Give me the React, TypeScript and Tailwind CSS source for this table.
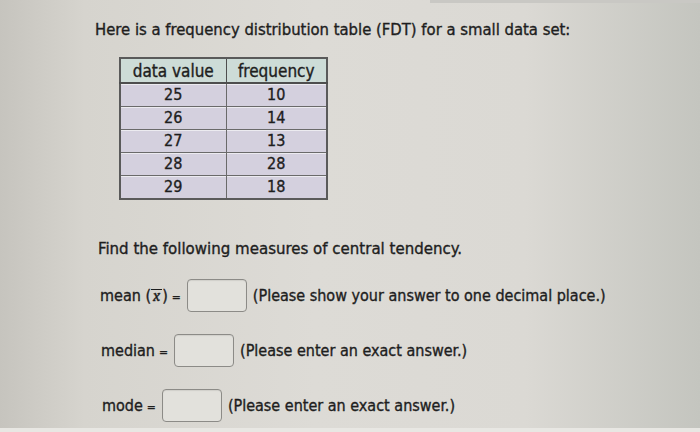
const rows = [
  { value: 25, freq: 10 },
  { value: 26, freq: 14 },
  { value: 27, freq: 13 },
  { value: 28, freq: 28 },
  { value: 29, freq: 18 },
];

function AnswerBox() {
  return (
    <div className="w-[60px] h-[33px] rounded-[4px] border border-[#8c8b87] bg-[#e2e1dc] shadow-[inset_0_1px_1px_rgba(0,0,0,0.08)]" />
  );
}

function Equals() {
  return <span className="ml-[4px] text-[12px]">=</span>;
}

export default function App() {
  return (
    <div
      className="relative w-[700px] h-[432px] overflow-hidden bg-[linear-gradient(90deg,#c6c4be_0%,#d6d4ce_12%,#dddbd6_45%,#dbd9d4_75%,#c4c5bf_100%)] text-[#1e1e1e] [-webkit-text-stroke:0.35px_#1e1e1e]"
      style={{ fontFamily: '"DejaVu Sans Condensed", "DejaVu Sans", sans-serif' }}
    >
      <div className="absolute top-0 left-[430px] right-0 h-[3px] bg-[#c9c8c4]" />
      <div className="absolute bottom-0 left-0 right-0 h-[4px] bg-[#e8e7e3]" />

      <div className="flex flex-col pl-[95px] pt-[18px]">
        <p className="text-[16.5px] leading-[24px]">
          Here is a frequency distribution table (FDT) for a small data set:
        </p>

        <table className="mt-[15px] ml-[24px] w-[209px] border-collapse border-2 border-[#5a5a5a] text-center">
          <thead>
            <tr className="bg-[#cddcd7] h-[25px]">
              <th className="w-[106px] border-r border-b-2 border-[#4e4e4e] text-[17px] font-normal leading-[22px]">
                data value
              </th>
              <th className="border-b-2 border-[#4e4e4e] text-[17px] font-normal leading-[22px]">
                frequency
              </th>
            </tr>
          </thead>
          <tbody>
            {rows.map((row) => (
              <tr key={row.value} className="bg-[#d4d0de] h-[23px]">
                <td className="border-r border-b border-[#6a6a6a] text-[16px] leading-[22px] shadow-[inset_0_1px_0_#ecebf0]">
                  {row.value}
                </td>
                <td className="border-b border-[#6a6a6a] text-[16px] leading-[22px] shadow-[inset_0_1px_0_#ecebf0]">
                  {row.freq}
                </td>
              </tr>
            ))}
          </tbody>
        </table>

        <p className="mt-[36px] ml-[3px] text-[16.7px] leading-[24px]">
          Find the following measures of central tendency.
        </p>

        <div className="mt-[19px] ml-[5px] flex items-center gap-[6px] text-[16px]">
          <span>
            mean (
            <span className="font-serif italic border-t border-[#1e1e1e] leading-[13px] inline-block px-[2px]">x</span>
            )<Equals />
          </span>
          <AnswerBox />
          <span>(Please show your answer to one decimal place.)</span>
        </div>

        <div className="mt-[22px] ml-[6px] flex items-center gap-[6px] text-[16px]">
          <span>
            median
            <Equals />
          </span>
          <AnswerBox />
          <span>(Please enter an exact answer.)</span>
        </div>

        <div className="mt-[22px] ml-[7px] flex items-center gap-[6px] text-[16px]">
          <span>
            mode
            <Equals />
          </span>
          <AnswerBox />
          <span>(Please enter an exact answer.)</span>
        </div>
      </div>
    </div>
  );
}
